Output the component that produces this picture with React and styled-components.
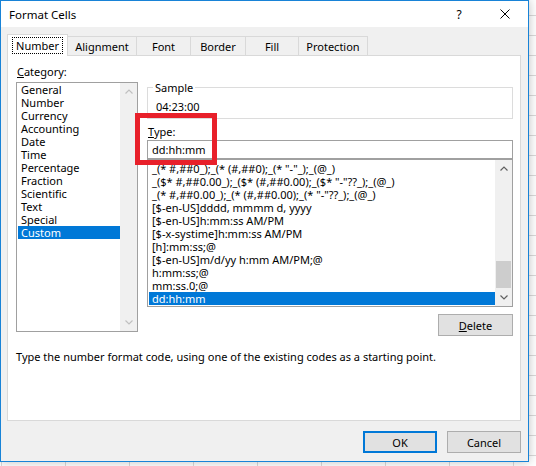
import React from "react";
import styled, { createGlobalStyle, css } from "styled-components";

const ui = `"Segoe UI", "Noto Sans", "Liberation Sans", sans-serif`;

const GlobalStyle = createGlobalStyle`
  html, body {
    margin: 0;
    padding: 0;
    background: #ffffff;
  }
  body {
    font-family: ${ui};
    font-size: 11px;
    color: #000000;
  }
`;

const Sheet = styled.div`
  position: relative;
  width: 536px;
  height: 466px;
  overflow: hidden;
  background-color: #ffffff;
  background-image: linear-gradient(#dadada 1px, transparent 1px),
    linear-gradient(90deg, #dadada 1px, transparent 1px);
  background-size: 100% 20px, 64px 100%;
  background-position: 0 15px, 1px 0;
`;

const Dialog = styled.div`
  width: 529px;
  height: 462px;
  box-sizing: border-box;
  border: 1px solid #1883d7;
  background: #f0f0f0;
  display: flex;
  flex-direction: column;
  box-shadow: 0 0 10px rgba(0, 0, 0, 0.25);
`;

const TitleBar = styled.div`
  height: 26px;
  background: #ffffff;
  display: flex;
  align-items: center;
  padding-left: 8px;
  flex-shrink: 0;
`;

const Title = styled.div`
  flex: 1;
  font-size: 11.5px;
`;

const CaptionButton = styled.div`
  width: 46px;
  height: 26px;
  display: flex;
  align-items: center;
  justify-content: center;
  font-size: 12px;
  color: #000000;
`;

const Body = styled.div`
  flex: 1;
  display: flex;
  flex-direction: column;
  padding: 7px 7px 8px 6px;
`;

const TabStrip = styled.div`
  height: 21px;
  display: flex;
  align-items: flex-start;
  position: relative;
  z-index: 1;
`;

const Tab = styled.div`
  box-sizing: border-box;
  width: ${(p) => p.w}px;
  margin-left: -1px;
  border: 1px solid #d9d9d9;
  border-bottom: none;
  display: flex;
  align-items: center;
  justify-content: center;
  ${(p) =>
    p.active
      ? css`
          height: 22px;
          margin-left: 0;
          background: #ffffff;
        `
      : css`
          height: 19px;
          margin-top: 2px;
          background: #f0f0f0;
        `}
`;

const FocusRect = styled.span`
  outline: 1px dotted #000000;
  padding: 0 3px;
  line-height: 15px;
`;

const Panel = styled.div`
  box-sizing: border-box;
  height: 366px;
  background: #ffffff;
  border: 1px solid #d9d9d9;
  padding: 8px 7px 0 8px;
  display: flex;
  flex-direction: column;
`;

const Columns = styled.div`
  display: grid;
  grid-template-columns: 122px 1fr;
  column-gap: 9px;
  align-items: start;
`;

const Column = styled.div`
  display: flex;
  flex-direction: column;
`;

const Label = styled.div`
  line-height: 15px;
  padding-left: 1px;
  margin-bottom: ${(p) => p.mb || 0}px;
  margin-top: ${(p) => p.mt || 0}px;
`;

const ListBox = styled.div`
  box-sizing: border-box;
  height: ${(p) => p.h}px;
  border: 1px solid #a0a0a0;
  background: #ffffff;
  display: flex;
`;

const ListItems = styled.div`
  flex: 1;
  min-width: 0;
  overflow: hidden;
  padding: ${(p) => p.pt || 0}px 0 0 1px;
  display: flex;
  flex-direction: column;
`;

const ListRow = styled.div`
  height: 13px;
  line-height: 13px;
  padding-left: 3px;
  white-space: nowrap;
  ${(p) =>
    p.selected &&
    css`
      background: #0078d7;
      color: #ffffff;
    `}
`;

const ScrollBar = styled.div`
  width: 17px;
  background: #f0f0f0;
  display: flex;
  flex-direction: column;
  flex-shrink: 0;
`;

const ScrollArrow = styled.div`
  height: 17px;
  display: flex;
  align-items: center;
  justify-content: center;
  color: ${(p) => (p.disabled ? "#c0c0c0" : "#606060")};
`;

const ScrollTrack = styled.div`
  flex: 1;
  display: flex;
  flex-direction: column;
  justify-content: flex-end;
  padding-bottom: 1px;
`;

const ScrollThumb = styled.div`
  height: 27px;
  margin: 0 1px;
  background: #cdcdcd;
`;

const GroupBox = styled.div`
  position: relative;
  box-sizing: border-box;
  height: 32px;
  margin-top: 23px;
  border: 1px solid #dcdcdc;
  padding: 11px 0 0 8px;
  line-height: 15px;
`;

const Legend = styled.span`
  position: absolute;
  top: -8px;
  left: 5px;
  padding: 0 2px;
  background: #ffffff;
  line-height: 15px;
`;

const TextInput = styled.div`
  box-sizing: border-box;
  height: 19px;
  border: 1px solid #a0a0a0;
  padding-left: 4px;
  line-height: 17px;
`;

const ButtonRow = styled.div`
  display: flex;
  justify-content: flex-end;
  gap: 10px;
  margin-top: ${(p) => p.mt || 0}px;
`;

const Button = styled.div`
  box-sizing: border-box;
  width: ${(p) => p.w || 74}px;
  height: 22px;
  background: #e1e1e1;
  border: ${(p) => (p.primary ? "2px solid #0078d7" : "1px solid #adadad")};
  display: flex;
  align-items: center;
  justify-content: center;
`;

const Hint = styled.div`
  margin-top: 13px;
  line-height: 15px;
`;

const Highlight = styled.div`
  position: absolute;
  left: 135px;
  top: 113px;
  width: 82px;
  height: 52px;
  box-sizing: border-box;
  border: 5px solid #e8202a;
  pointer-events: none;
`;

const Chevron = ({ up }) => (
  <svg width="8" height="5" viewBox="0 0 8 5">
    <polyline
      points={up ? "0.5,4.5 4,1 7.5,4.5" : "0.5,0.5 4,4 7.5,0.5"}
      fill="none"
      stroke="currentColor"
      strokeWidth="1.2"
    />
  </svg>
);

const CloseIcon = () => (
  <svg width="10" height="10" viewBox="0 0 10 10">
    <path d="M0.5 0.5 L9.5 9.5 M9.5 0.5 L0.5 9.5" stroke="#000" strokeWidth="1" />
  </svg>
);

const tabs = [
  { name: "Number", w: 61 },
  { name: "Alignment", w: 70 },
  { name: "Font", w: 55 },
  { name: "Border", w: 56 },
  { name: "Fill", w: 54 },
  { name: "Protection", w: 70 },
];

const categories = [
  "General",
  "Number",
  "Currency",
  "Accounting",
  "Date",
  "Time",
  "Percentage",
  "Fraction",
  "Scientific",
  "Text",
  "Special",
  "Custom",
];

const formats = [
  '_(* #,##0_);_(* (#,##0);_(* "-"_);_(@_)',
  '_($* #,##0.00_);_($* (#,##0.00);_($* "-"??_);_(@_)',
  '_(* #,##0.00_);_(* (#,##0.00);_(* "-"??_);_(@_)',
  "[$-en-US]dddd, mmmm d, yyyy",
  "[$-en-US]h:mm:ss AM/PM",
  "[$-x-systime]h:mm:ss AM/PM",
  "[h]:mm:ss;@",
  "[$-en-US]m/d/yy h:mm AM/PM;@",
  "h:mm:ss;@",
  "mm:ss.0;@",
  "dd:hh:mm",
];

export default function App() {
  return (
    <Sheet>
      <GlobalStyle />
      <Dialog>
        <TitleBar>
          <Title>Format Cells</Title>
          <CaptionButton>?</CaptionButton>
          <CaptionButton>
            <CloseIcon />
          </CaptionButton>
        </TitleBar>
        <Body>
          <TabStrip>
            {tabs.map((t, i) => (
              <Tab key={t.name} w={t.w} active={i === 0}>
                {i === 0 ? <FocusRect>{t.name}</FocusRect> : t.name}
              </Tab>
            ))}
          </TabStrip>
          <Panel>
            <Columns>
              <Column>
                <Label mb={3}>
                  <u>C</u>ategory:
                </Label>
                <ListBox h={250}>
                  <ListItems>
                    {categories.map((c) => (
                      <ListRow key={c} selected={c === "Custom"}>
                        {c}
                      </ListRow>
                    ))}
                  </ListItems>
                  <ScrollBar>
                    <ScrollArrow disabled>
                      <Chevron up />
                    </ScrollArrow>
                    <ScrollTrack />
                    <ScrollArrow disabled>
                      <Chevron />
                    </ScrollArrow>
                  </ScrollBar>
                </ListBox>
              </Column>
              <Column>
                <GroupBox>
                  <Legend>Sample</Legend>
                  04:23:00
                </GroupBox>
                <Label mt={5} mb={1}>
                  <u>T</u>ype:
                </Label>
                <TextInput>dd:hh:mm</TextInput>
                <ListBox h={148}>
                  <ListItems pt={2}>
                    {formats.map((f) => (
                      <ListRow key={f} selected={f === "dd:hh:mm"}>
                        {f}
                      </ListRow>
                    ))}
                  </ListItems>
                  <ScrollBar>
                    <ScrollArrow>
                      <Chevron up />
                    </ScrollArrow>
                    <ScrollTrack>
                      <ScrollThumb />
                    </ScrollTrack>
                    <ScrollArrow>
                      <Chevron />
                    </ScrollArrow>
                  </ScrollBar>
                </ListBox>
                <ButtonRow mt={7}>
                  <Button w={75}>
                    <span>
                      <u>D</u>elete
                    </span>
                  </Button>
                </ButtonRow>
              </Column>
            </Columns>
            <Hint>
              Type the number format code, using one of the existing codes as a
              starting point.
            </Hint>
          </Panel>
          <ButtonRow mt={10}>
            <Button primary>OK</Button>
            <Button>Cancel</Button>
          </ButtonRow>
        </Body>
      </Dialog>
      <Highlight />
    </Sheet>
  );
}
